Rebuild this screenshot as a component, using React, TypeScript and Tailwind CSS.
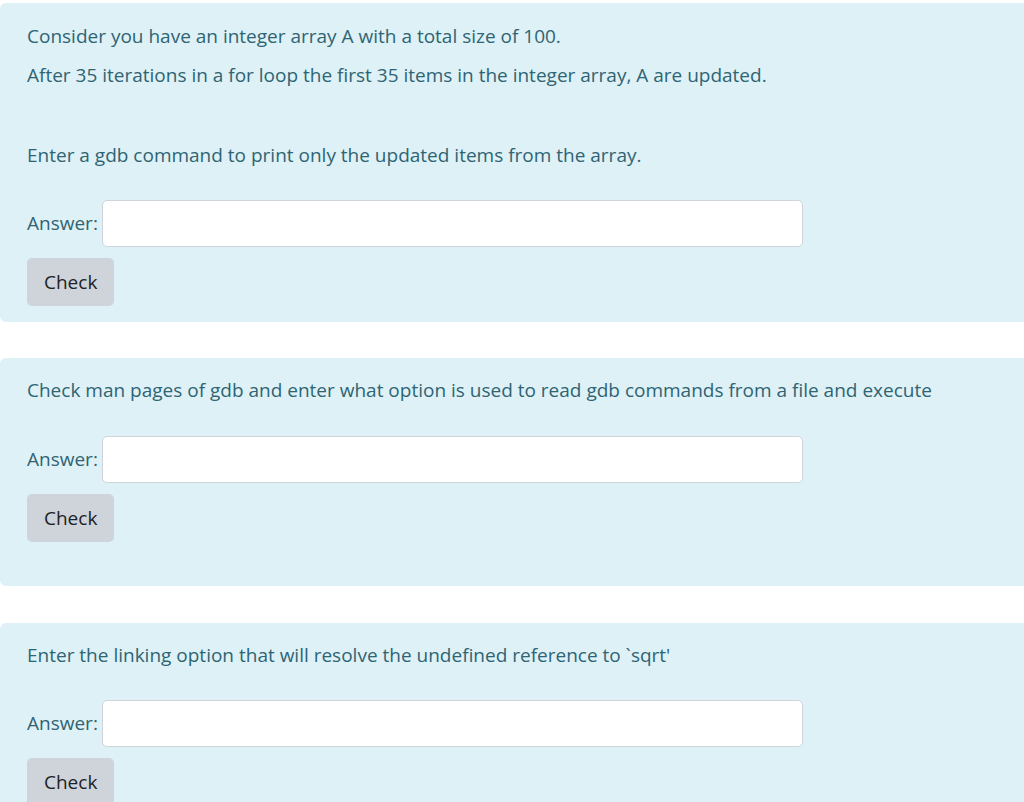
const questions = [
  {
    lines: [
      'Consider you have an integer array A with a total size of 100.',
      'After 35 iterations in a for loop the first 35 items in the integer array, A are updated.',
    ],
    prompt: 'Enter a gdb command to print only the updated items from the array.',
  },
  {
    lines: [],
    prompt: 'Check man pages of gdb and enter what option is used to read gdb commands from a file and execute',
  },
  {
    lines: [],
    prompt: "Enter the linking option that will resolve the undefined reference to `sqrt'",
  },
]

function AnswerRow() {
  return (
    <>
      <div className="flex items-center h-[47px]">
        <label className="mr-[4px]">Answer:</label>
        <input
          type="text"
          className="w-[701px] h-[47px] bg-white border border-[#ced4da] rounded-[5px] px-3 outline-none"
        />
      </div>
      <button className="mt-[11px] h-[48px] px-[17px] bg-[#ced4da] rounded-[5px] text-[#1d2125]">
        Check
      </button>
    </>
  )
}

export default function App() {
  return (
    <div
      className="w-[1024px] h-[802px] overflow-hidden bg-white text-[19px] text-[#2f6473]"
      style={{ fontFamily: '"Open Sans", "Noto Sans", Arial, sans-serif' }}
    >
      <div className="mt-[3px] mr-[-8px] bg-[#def1f7] rounded-[6px] px-[27px] pt-[14px] pb-[16px]">
        {questions[0].lines.map((l) => (
          <p key={l} className="leading-[39px]">{l}</p>
        ))}
        <p className="mt-[41px] leading-[39px]">{questions[0].prompt}</p>
        <div className="mt-[25px]">
          <AnswerRow />
        </div>
      </div>

      <div className="mt-[36px] mr-[-8px] bg-[#def1f7] rounded-[6px] px-[27px] pt-[13px] pb-[44px]">
        <p className="leading-[39px]">{questions[1].prompt}</p>
        <div className="mt-[26px]">
          <AnswerRow />
        </div>
      </div>

      <div className="mt-[37px] mr-[-8px] bg-[#def1f7] rounded-[6px] px-[27px] pt-[13px] pb-[44px]">
        <p className="leading-[39px]">{questions[2].prompt}</p>
        <div className="mt-[25px]">
          <AnswerRow />
        </div>
      </div>
    </div>
  )
}
